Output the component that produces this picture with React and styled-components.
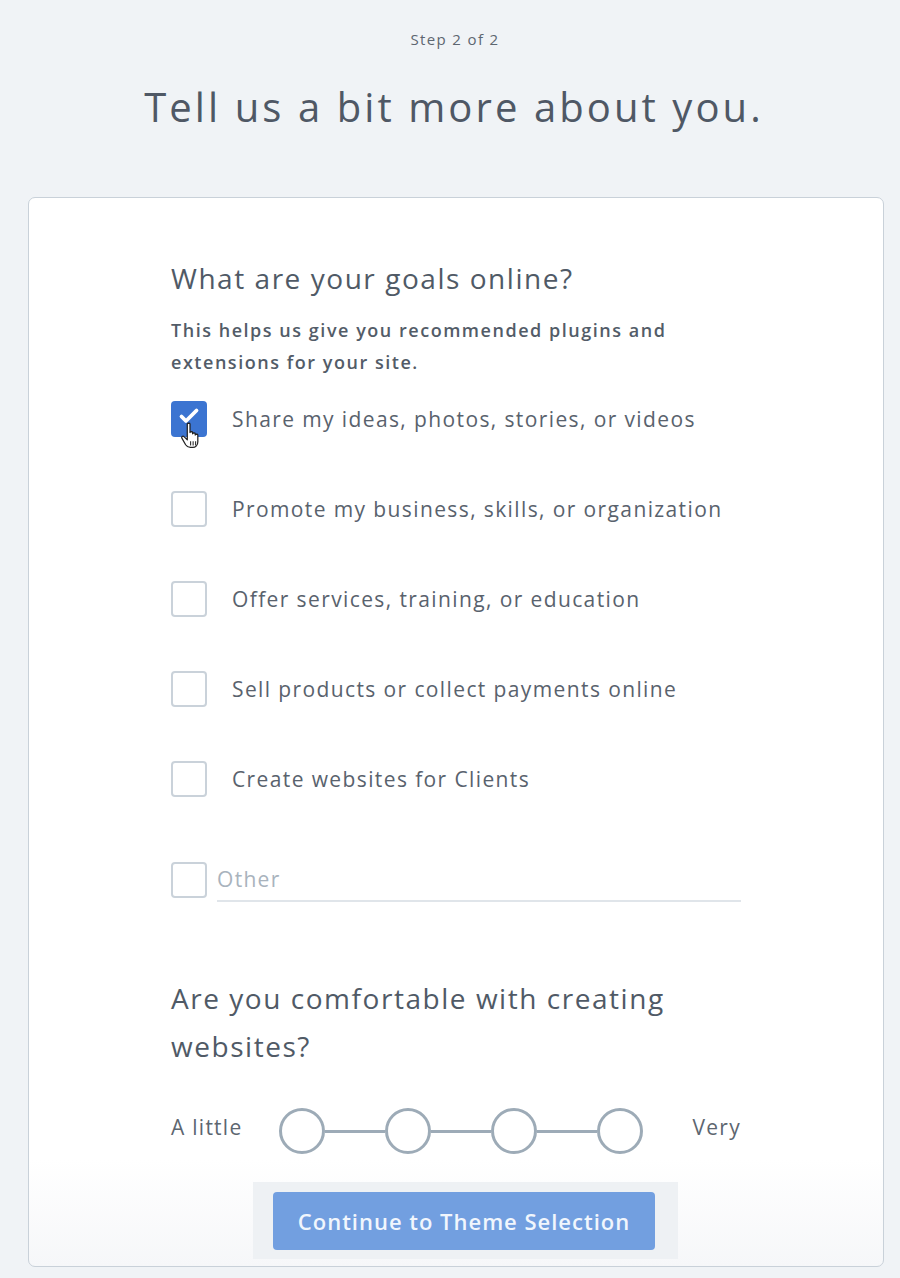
import React from "react";
import styled, { createGlobalStyle } from "styled-components";

const Global = createGlobalStyle`
  html, body { margin: 0; padding: 0; }
  body {
    background: #f0f3f6;
    font-family: "Open Sans", "Noto Sans", sans-serif;
    color: #505a66;
  }
`;

const Page = styled.div`
  width: 900px;
  height: 1278px;
  overflow: hidden;
  display: flex;
  flex-direction: column;
`;

const Step = styled.div`
  margin-top: 29px;
  padding-left: 10px;
  text-align: center;
  font-size: 15px;
  line-height: 20px;
  letter-spacing: 0.09em;
  color: #5d6670;
`;

const Title = styled.h1`
  margin: 30px 0 0;
  padding-left: 8px;
  text-align: center;
  font-size: 40px;
  line-height: 56px;
  font-weight: 400;
  color: #4f5865;
  letter-spacing: 0.077em;
`;

const Card = styled.div`
  margin: 62px 0 0 28px;
  width: 854px;
  height: 1068px;
  border: 1px solid #c9d1d9;
  border-radius: 7px;
  background: linear-gradient(to bottom, #ffffff 90%, #f6f7f9 100%);
  box-sizing: content-box;
`;

const Column = styled.div`
  width: 570px;
  margin: 0 auto;
  padding-top: 60px;
  display: flex;
  flex-direction: column;
`;

const Heading = styled.h2`
  margin: 0;
  font-size: 28px;
  line-height: ${(p) => p.$lh || 40}px;
  font-weight: 400;
  letter-spacing: 0.055em;
  color: #505a66;
`;

const Description = styled.p`
  margin: 16px 0 0;
  font-size: 18px;
  line-height: 32px;
  font-weight: 600;
  letter-spacing: 0.085em;
  color: #535c68;
`;

const Options = styled.div`
  margin-top: 23px;
  display: flex;
  flex-direction: column;
  gap: 54px;
`;

const Row = styled.label`
  display: flex;
  align-items: center;
  height: 36px;
  position: relative;
`;

const Box = styled.span`
  flex: 0 0 auto;
  width: 36px;
  height: 36px;
  box-sizing: border-box;
  border-radius: 4px;
  border: ${(p) => (p.$checked ? "none" : "2px solid #cad2da")};
  background: ${(p) => (p.$checked ? "#3b74d1" : "#fff")};
  display: flex;
  align-items: center;
  justify-content: center;
`;

const OptionText = styled.span`
  margin-left: 25px;
  font-size: 21px;
  letter-spacing: 0.066em;
  color: #59626d;
`;

const OtherRow = styled.div`
  margin-top: 61px;
  display: flex;
  align-items: center;
  height: 44px;
`;

const OtherInput = styled.input`
  margin-left: 10px;
  flex: 1;
  height: 44px;
  box-sizing: border-box;
  border: none;
  border-bottom: 2px solid #e0e5ea;
  background: transparent;
  font-family: inherit;
  font-size: 21px;
  letter-spacing: 0.062em;
  padding: 0;
  color: #59626d;
  outline: none;
  &::placeholder { color: #a9b3bd; }
`;

const SecondHeading = styled(Heading)`
  margin-top: 72px;
`;

const Scale = styled.div`
  margin-top: 38px;
  display: flex;
  align-items: center;
  height: 46px;
`;

const ScaleLabel = styled.span`
  font-size: 21px;
  letter-spacing: 0.06em;
  color: #5d6670;
  margin-top: -9px;
  ${(p) => p.$end && "margin-left: auto;"}
`;

const Track = styled.div`
  margin-left: 37px;
  display: flex;
  align-items: center;
`;

const Dot = styled.span`
  width: 46px;
  height: 46px;
  box-sizing: border-box;
  border-radius: 50%;
  border: 3px solid #9dabb7;
  background: #fff;
`;

const Connector = styled.span`
  width: 60px;
  height: 3px;
  background: #9dabb7;
`;

const Footer = styled.div`
  margin: 28px 0 0 82px;
  width: 425px;
  height: 77px;
  box-sizing: border-box;
  padding: 10px 23px 9px 20px;
  background: #eef1f4;
`;

const Button = styled.button`
  width: 382px;
  height: 58px;
  border: none;
  border-radius: 4px;
  background: #729fe0;
  color: #f1f6fd;
  font-family: "Open Sans", sans-serif;
  font-size: 22px;
  font-weight: 600;
  letter-spacing: 0.045em;
  cursor: pointer;
`;

const Cursor = styled.svg`
  position: absolute;
  left: 9px;
  top: 19px;
  width: 25px;
  height: 32px;
`;

const Check = () => (
  <svg width="22" height="18" viewBox="0 0 22 18" style={{ marginTop: -7 }}>
    <path d="M3.5 9.5l4.5 4.5L18.5 3.5" fill="none" stroke="#fff" strokeWidth="3.8" strokeLinecap="round" strokeLinejoin="round" />
  </svg>
);

const options = [
  "Share my ideas, photos, stories, or videos",
  "Promote my business, skills, or organization",
  "Offer services, training, or education",
  "Sell products or collect payments online",
  "Create websites for Clients",
];

export default function App() {
  return (
    <Page>
      <Global />
      <Step>Step 2 of 2</Step>
      <Title>Tell us a bit more about you.</Title>
      <Card>
        <Column>
          <Heading>What are your goals online?</Heading>
          <Description>
            This helps us give you recommended plugins and extensions for your site.
          </Description>
          <Options>
            {options.map((o, i) => (
              <Row key={o}>
                <Box $checked={i === 0}>{i === 0 && <Check />}</Box>
                <OptionText>{o}</OptionText>
                {i === 0 && (
                  <Cursor viewBox="0 0 24 28">
                    <path
                      d="M7 2.5c0-1.1 2.6-1.1 2.6 0v8.2c0-1.1 2.5-1.1 2.5 0v1.2c0-1.1 2.5-1.1 2.5 0v1.2c0-1.1 2.5-1.1 2.5 0v6.4c0 3-2 5.5-5 5.5h-2.2c-2.2 0-3.4-1-4.5-2.6L1.8 16c-.8-1.3.9-2.5 2-1.4L7 17.6z"
                      fill="#fff"
                      stroke="#222"
                      strokeWidth="1.2"
                      strokeLinejoin="round"
                    />
                    <path d="M10.2 19v4M12.6 19v4M15 19v4" stroke="#222" strokeWidth="1" />
                  </Cursor>
                )}
              </Row>
            ))}
          </Options>
          <OtherRow>
            <Box />
            <OtherInput placeholder="Other" />
          </OtherRow>
          <SecondHeading $lh={48}>Are you comfortable with creating websites?</SecondHeading>
          <Scale>
            <ScaleLabel>A little</ScaleLabel>
            <Track>
              <Dot />
              <Connector />
              <Dot />
              <Connector />
              <Dot />
              <Connector />
              <Dot />
            </Track>
            <ScaleLabel $end>Very</ScaleLabel>
          </Scale>
          <Footer>
            <Button>Continue to Theme Selection</Button>
          </Footer>
        </Column>
      </Card>
    </Page>
  );
}
